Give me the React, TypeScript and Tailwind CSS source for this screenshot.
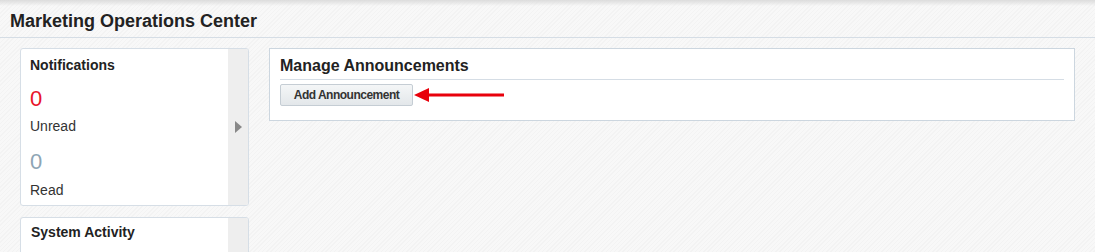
import React from "react";

export default function App() {
  return (
    <div
      className="relative w-[1095px] h-[252px] overflow-hidden bg-[repeating-linear-gradient(135deg,#f3f3f3_0px,#f3f3f3_1px,#f8f8f8_1px,#f8f8f8_3px)] text-[#333]"
      style={{ fontFamily: '"Liberation Sans", Arial, sans-serif' }}
    >
      <div className="absolute top-0 left-0 right-0 h-[6px] bg-[linear-gradient(to_bottom,#dcdcdc,rgba(240,240,240,0))]" />
      <div className="h-[38px] border-b border-[#d5dde5] pl-[10px] pt-[10px]">
        <h1 className="text-[18px] leading-[22px] font-bold text-[#222]">Marketing Operations Center</h1>
      </div>
      <div className="flex gap-[20px] pl-[20px] pr-[20px] pt-[10px]">
        <div className="flex flex-col gap-[11px] w-[229px] shrink-0">
          <div className="flex h-[158px] bg-white border border-[#d6dee6] rounded-[3px] overflow-hidden">
            <div className="flex-1 pl-[9px] pt-[8px]">
              <div className="text-[14px] leading-[16px] font-bold text-[#222]">Notifications</div>
              <div className="mt-[13px] text-[22px] leading-[26px] text-[#e8142a]">0</div>
              <div className="mt-[6px] text-[14px] leading-[16px] text-[#333]">Unread</div>
              <div className="mt-[15px] text-[22px] leading-[26px] text-[#8ea5b5]">0</div>
              <div className="mt-[7px] text-[14px] leading-[16px] text-[#333]">Read</div>
            </div>
            <div className="w-[20px] bg-[#eeeeee] flex items-center justify-center">
              <svg width="7" height="12" viewBox="0 0 7 12">
                <polygon points="0,0 7,6 0,12" fill="#888" />
              </svg>
            </div>
          </div>
          <div className="flex h-[60px] bg-white border border-[#d6dee6] rounded-[3px] overflow-hidden">
            <div className="flex-1 pl-[10px] pt-[6px]">
              <div className="text-[14px] leading-[16px] font-bold text-[#222]">System Activity</div>
            </div>
            <div className="w-[20px] bg-[#eeeeee]" />
          </div>
        </div>
        <div className="flex-1 h-[73px] bg-white border border-[#ccd6df] px-[10px] pt-[7px]">
          <div className="text-[16px] leading-[20px] font-bold text-[#222] pb-[3px] border-b border-[#d5dde5]">
            Manage Announcements
          </div>
          <div className="flex items-center mt-[4px]">
            <button className="h-[22px] w-[133px] border border-[#c5cdd4] rounded-[2px] bg-[linear-gradient(to_bottom,#f4f6f7,#e3e7ea)] text-[12px] font-bold tracking-[-0.5px] text-[#333] leading-[18px]">
              Add Announcement
            </button>
            <svg width="90" height="16" viewBox="0 0 90 16" className="ml-[1px]">
              <polygon points="0,8 15,1 15,15" fill="#e8000b" />
              <rect x="13" y="6.5" width="77" height="3" fill="#e8000b" />
            </svg>
          </div>
        </div>
      </div>
    </div>
  );
}
